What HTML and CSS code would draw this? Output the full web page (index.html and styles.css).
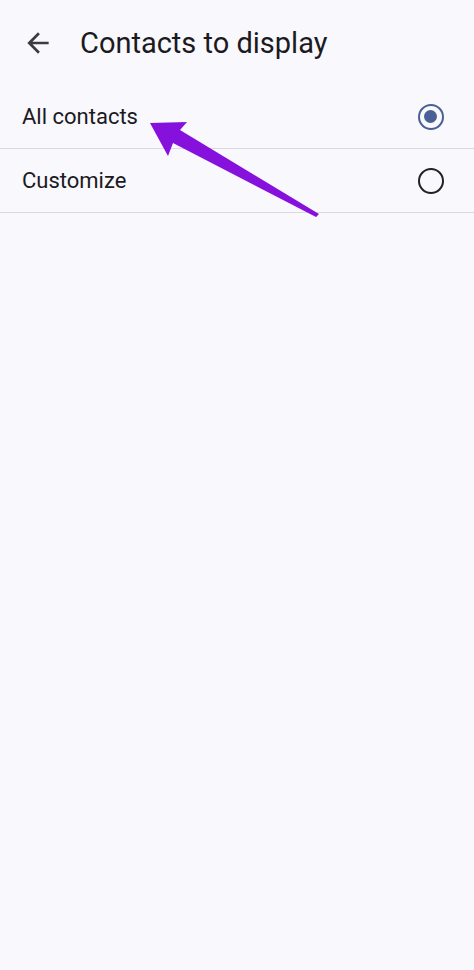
FILE: index.html
```html
<!DOCTYPE html>
<html lang="en">
<head>
	<meta charset="UTF-8">
	<meta name="viewport" content="width=device-width, initial-scale=1.0">
	<title>Contacts to display</title>
	<link rel="stylesheet" href="styles.css">
</head>
<body>
	<div class="page">
		<div class="header">
			<svg class="back" width="32" height="32" viewBox="0 0 24 24">
				<path d="M20 11H7.83l5.59-5.59L12 4l-8 8 8 8 1.41-1.41L7.83 13H20v-2z" fill="#3b3b40"/>
			</svg>
			<h1>Contacts to display</h1>
		</div>

		<div class="option">
			<span class="label">All contacts</span>
			<span class="radio checked"></span>
		</div>
		<div class="option">
			<span class="label">Customize</span>
			<span class="radio"></span>
		</div>

		<!-- annotation arrow drawn over the list -->
		<svg class="pointer" width="474" height="240" viewBox="0 0 474 240">
			<polygon points="150,123 187,122 180,130 319,214 316,217 173,143 168,156" fill="#8610dc"/>
		</svg>
	</div>
</body>
</html>
```

FILE: styles.css
```css
* {
	box-sizing: border-box;
}
html, body {
	margin: 0;
	background-color: #f9f8fd;
}
body {
	font-family: Roboto, "Noto Sans", sans-serif;
	color: #1b1a1f;
}
.page {
	position: relative;
	width: 474px;
	height: 970px;
}
.header {
	display: flex;
	align-items: center;
	height: 85px;
	padding-left: 22px;
}
.header .back {
	flex-shrink: 0;
}
.header h1 {
	margin: 0 0 0 26px;
	font-size: 29px;
	font-weight: 400;
	color: #1b1a1f;
}
.option {
	display: flex;
	align-items: center;
	justify-content: space-between;
	height: 64px;
	padding: 0 30px 0 22px;
	border-bottom: 1px solid #dbdadf;
}
.label {
	font-size: 22px;
}
.radio {
	width: 26px;
	height: 26px;
	border: 2.5px solid #222226;
	border-radius: 50%;
	position: relative;
}
.radio.checked {
	border-color: #4a5f96;
}
.radio.checked::after {
	content: "";
	position: absolute;
	left: 4px;
	top: 4px;
	width: 13px;
	height: 13px;
	border-radius: 50%;
	background-color: #4a5f96;
}
.pointer {
	position: absolute;
	left: 0;
	top: 0;
}
```
